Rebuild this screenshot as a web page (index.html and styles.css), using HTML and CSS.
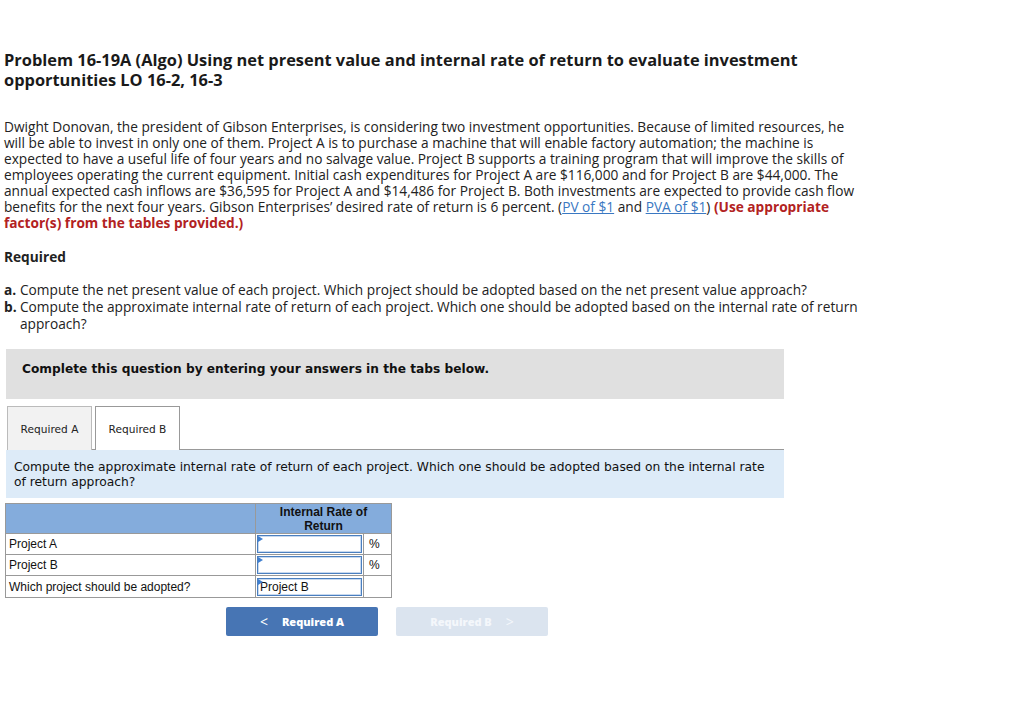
FILE: index.html
```html
<!DOCTYPE html>
<html>
<head>
<meta charset="utf-8">
<link rel="stylesheet" href="styles.css">
</head>
<body>
<div class="page">
  <h1 class="title">Problem 16-19A (Algo) Using net present value and internal rate of return to evaluate investment opportunities LO 16-2, 16-3</h1>
  <p class="intro">Dwight Donovan, the president of Gibson Enterprises, is considering two investment opportunities. Because of limited resources, he will be able to invest in only one of them. Project A is to purchase a machine that will enable factory automation; the machine is expected to have a useful life of four years and no salvage value. Project B supports a training program that will improve the skills of employees operating the current equipment. Initial cash expenditures for Project A are $116,000 and for Project B are $44,000. The annual expected cash inflows are $36,595 for Project A and $14,486 for Project B. Both investments are expected to provide cash flow benefits for the next four years. Gibson Enterprises’ desired rate of return is 6 percent. (<a class="link" href="#">PV of $1</a> and <a class="link" href="#">PVA of $1</a>) <strong class="red">(Use appropriate factor(s) from the tables provided.)</strong></p>
  <h2 class="req">Required</h2>
  <ol class="reqlist">
    <li><span class="lbl">a.</span><span class="txt">Compute the net present value of each project. Which project should be adopted based on the net present value approach?</span></li>
    <li><span class="lbl">b.</span><span class="txt">Compute the approximate internal rate of return of each project. Which one should be adopted based on the internal rate of return approach?</span></li>
  </ol>
  <div class="widget">
    <div class="banner">Complete this question by entering your answers in the tabs below.</div>
    <div class="tabs">
      <div class="tab">Required A</div>
      <div class="tab active">Required B</div>
    </div>
    <div class="instr">Compute the approximate internal rate of return of each project. Which one should be adopted based on the internal rate of return approach?</div>
    <table class="grid">
      <colgroup><col class="w1"><col class="w2"><col class="w3"></colgroup>
      <tr class="head">
        <th class="c1"></th>
        <th class="c2" colspan="2">Internal Rate of<br>Return</th>
      </tr>
      <tr>
        <td class="c1">Project A</td>
        <td class="c2"><div class="inp"><span class="flag"></span></div></td>
        <td class="c3">%</td>
      </tr>
      <tr>
        <td class="c1">Project B</td>
        <td class="c2"><div class="inp"><span class="flag"></span></div></td>
        <td class="c3">%</td>
      </tr>
      <tr class="last">
        <td class="c1">Which project should be adopted?</td>
        <td class="c2"><div class="inp"><span class="flag"></span>Project B</div></td>
        <td class="c3"></td>
      </tr>
    </table>
    <div class="nav">
      <button class="btn prev"><span class="chev">&lt;</span>Required A</button>
      <button class="btn next">Required B<span class="chev">&gt;</span></button>
    </div>
  </div>
</div>
</body>
</html>
```
FILE: styles.css
```css
html, body { margin: 0; padding: 0; background: #fff; }
.page {
  padding: 50px 4px 0 4px;
  font-family: "Open Sans", "Liberation Sans", sans-serif;
  color: #222;
}
.title {
  font-size: 16.4px;
  line-height: 20px;
  font-weight: 700;
  margin: 0 0 29px 0;
  max-width: 820px;
  color: #1a1a1a;
}
.intro {
  font-size: 13.7px;
  line-height: 16px;
  margin: 0 0 17px 0;
  max-width: 852px;
}
.link { color: #3a78c2; text-decoration: underline; }
.red { color: #b22222; font-weight: 700; }
.req {
  font-size: 13.7px;
  font-weight: 700;
  margin: 0 0 16px 0;
  line-height: 17px;
}
.reqlist {
  list-style: none;
  margin: 0 0 17px 0;
  padding: 0;
  font-size: 13.7px;
  line-height: 17px;
  max-width: 860px;
}
.reqlist li { display: flex; }
.lbl { width: 16px; font-weight: 700; flex: none; }
.txt { flex: 1; }
.widget { width: 778px; margin-left: 2px; }
.banner {
  background: #e0e0e0;
  height: 50px;
  box-sizing: border-box;
  padding: 13px 16px;
  font-family: "DejaVu Sans", Verdana, sans-serif;
  font-weight: 700;
  font-size: 12.2px;
  color: #111;
  margin-bottom: 7px;
}
.tabs {
  display: flex;
  gap: 3px;
  margin-left: 1px;
  border-bottom: 1px solid #999;
  height: 43px;
}
.tab {
  width: 85px;
  box-sizing: border-box;
  height: 44px;
  border: 1px solid #bbb;
  border-bottom: none;
  background: #f2f2f2;
  font-family: "DejaVu Sans", Verdana, sans-serif;
  font-size: 10.6px;
  color: #222;
  display: flex;
  align-items: center;
  justify-content: center;
}
.tab.active {
  background: #fff;
  border-color: #999;
  position: relative;
  z-index: 1;
}
.instr {
  background: #ddebf8;
  height: 48px;
  box-sizing: border-box;
  padding: 10px 8px;
  font-family: "DejaVu Sans", Verdana, sans-serif;
  font-size: 12.3px;
  line-height: 15px;
  color: #111;
  margin-bottom: 5px;
}
.grid {
  border-collapse: collapse;
  table-layout: fixed;
  width: 386px;
  margin-left: -1px;
  font-family: "Liberation Sans", Arial, sans-serif;
  font-size: 12px;
  color: #111;
}
.w1 { width: 250px; }
.w2 { width: 108px; }
.w3 { width: 28px; }
.grid td, .grid th {
  border: 1px solid #999;
  padding: 0;
}
.grid .head th {
  background: #84acdc;
  height: 29px;
  font-weight: 700;
  line-height: 14px;
}
.grid td { height: 20px; }
.grid .last td { height: 21px; }
.c1 { text-align: left; padding-left: 3px !important; }
.c2 { text-align: center; }
.c3 { text-align: left; padding-left: 5px !important; }
.inp {
  position: relative;
  height: 16px;
  margin: 1px;
  border: 1px solid #4a7fc0;
  box-shadow: inset 0 0 0 1px #c8d9ee;
  text-align: left;
  padding-left: 2px;
  line-height: 16px;
  background: #fff;
}
.flag {
  position: absolute;
  left: 0; top: 0;
  width: 0; height: 0;
  border-top: 3px solid transparent;
  border-bottom: 3px solid transparent;
  border-left: 5px solid #3f7fd0;
}
.nav {
  display: flex;
  gap: 18px;
  margin: 9px 0 0 220px;
}
.btn {
  width: 152px;
  height: 29px;
  border: none;
  border-radius: 2px;
  font-family: "Open Sans", "Liberation Sans", sans-serif;
  font-weight: 800;
  font-size: 11px;
  color: #fff;
  display: flex;
  align-items: center;
  justify-content: center;
  gap: 14px;
  padding: 0;
}
.btn.prev { background: #4775b4; }
.btn.next { background: #dbe4ef; color: #f4f7fb; }
.chev { font-weight: 400; font-size: 14px; }
```
